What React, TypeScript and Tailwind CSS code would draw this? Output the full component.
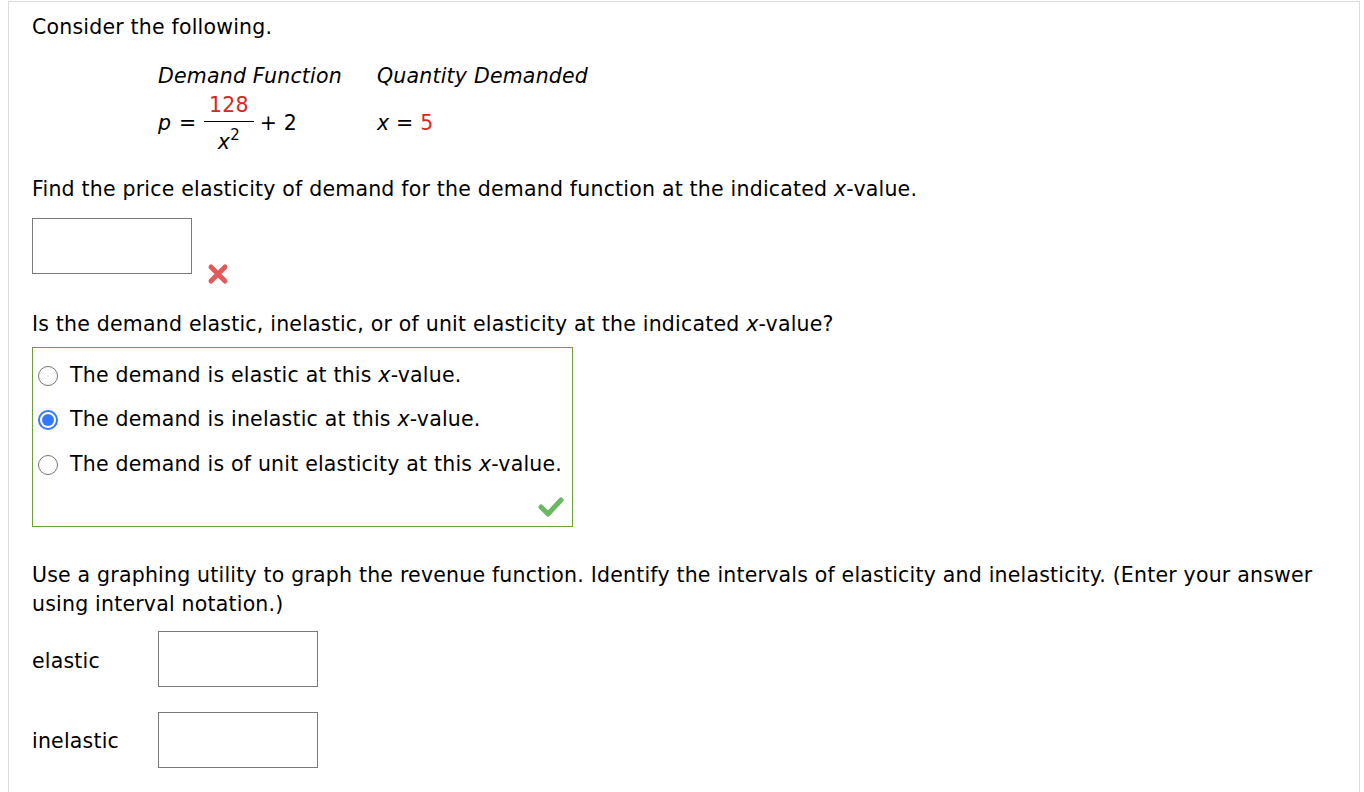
import React from 'react';

const font = { fontFamily: '"DejaVu Sans", Verdana, sans-serif' };

const XMark: React.FC = () => (
  <svg width="22" height="22" viewBox="0 0 22 22" className="block">
    <path d="M4 4 L18 18 M18 4 L4 18" stroke="#e35a5a" strokeWidth="5" strokeLinecap="round" />
  </svg>
);

const Check: React.FC = () => (
  <svg width="26" height="22" viewBox="0 0 26 22" className="block">
    <path d="M3 12 L10 19 L23 5" fill="none" stroke="#6ab862" strokeWidth="5" strokeLinecap="round" strokeLinejoin="round" />
  </svg>
);

const Radio: React.FC<{ checked?: boolean }> = ({ checked }) =>
  checked ? (
    <span className="w-[20px] h-[20px] rounded-full border-[2px] border-[#3478f6] flex items-center justify-center shrink-0">
      <span className="w-[12px] h-[12px] rounded-full bg-[#3478f6]" />
    </span>
  ) : (
    <span className="w-[20px] h-[20px] rounded-full border border-[#767676] bg-white shrink-0" />
  );

const Box: React.FC = () => <div className="w-[160px] h-[56px] border border-[#7a7a7a] bg-white shrink-0" />;

const I: React.FC<{ children: React.ReactNode }> = ({ children }) => <span className="italic">{children}</span>;

const options = [
  { t: 'The demand is elastic at this ', c: false },
  { t: 'The demand is inelastic at this ', c: true },
  { t: 'The demand is of unit elasticity at this ', c: false },
];

export default function App() {
  return (
    <div className="w-[1364px] h-[792px] bg-white overflow-hidden pt-[1px] pl-[8px] pr-[4px]" style={font}>
      <div className="h-[800px] border-t border-l border-r border-[#dcdcdc] pl-[23px] pt-[11px] text-[20.5px] tracking-[0.2px] text-black leading-[29px]">
        <p>Consider the following.</p>

        {/* demand table */}
        <div className="ml-[126px] mt-[20px] grid grid-cols-[219px_auto]">
          <div className="italic">Demand Function</div>
          <div className="italic">Quantity Demanded</div>
          <div className="h-[55px] mt-[5px] flex items-center">
            <span className="italic">p</span>
            <span className="ml-[1px]">&nbsp;=&nbsp;</span>
            <span className="ml-[1px] inline-flex flex-col items-stretch text-center">
              <span className="text-[#d42a1e] leading-[20px] pb-[6px] px-[5px]">128</span>
              <span className="border-t border-black" />
              <span className="leading-[20px] pt-[10px]">
                <I>x</I>
                <span className="text-[15px] relative -top-[9px] leading-none">2</span>
              </span>
            </span>
            <span className="ml-[6px]">+ 2</span>
          </div>
          <div className="h-[55px] mt-[5px] flex items-center">
            <span>
              <I>x</I> = <span className="text-[#d42a1e]">5</span>
            </span>
          </div>
        </div>

        <p className="mt-[24px]">
          Find the price elasticity of demand for the demand function at the indicated <I>x</I>-value.
        </p>

        <div className="flex items-end mt-[14px]">
          <Box />
          <div className="ml-[15px] -mb-[11px]">
            <XMark />
          </div>
        </div>

        <p className="mt-[36px]">
          Is the demand elastic, inelastic, or of unit elasticity at the indicated <I>x</I>-value?
        </p>

        <div className="mt-[8px] w-[541px] h-[180px] border border-[#6aa23a] relative pt-[13px]">
          {options.map((o, i) => (
            <div key={i} className={`flex items-center h-[29px] pl-[5px] ${i === 2 ? 'mt-[16px]' : i === 1 ? 'mt-[15px]' : ''}`}>
              <Radio checked={o.c} />
              <span className="ml-[12px]">
                {o.t}
                <I>x</I>-value.
              </span>
            </div>
          ))}
          <div className="absolute right-[8px] bottom-[9px]">
            <Check />
          </div>
        </div>

        <p className="mt-[34px] pr-[20px]">
          Use a graphing utility to graph the revenue function. Identify the intervals of elasticity and inelasticity. (Enter your answer using interval notation.)
        </p>

        <div className="flex items-center mt-[12px]">
          <span className="w-[126px] pt-[4px]">elastic</span>
          <Box />
        </div>
        <div className="flex items-center mt-[25px]">
          <span className="w-[126px] pt-[2px]">inelastic</span>
          <Box />
        </div>
      </div>
    </div>
  );
}
